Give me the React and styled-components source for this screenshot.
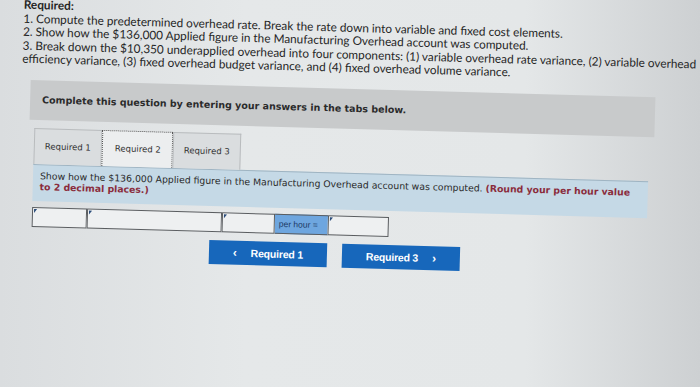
import React from 'react';
import styled, { createGlobalStyle } from 'styled-components';

const GlobalStyle = createGlobalStyle`
  html, body {
    margin: 0;
    padding: 0;
    width: 700px;
    height: 387px;
    overflow: hidden;
    background: linear-gradient(90deg, #dadddf 0%, #e5e8e9 35%, #e4e7e8 75%, #cdd0d2 100%);
  }
`;

const Page = styled.div`
  width: 700px;
  height: 387px;
  transform: rotate(1.6deg);
  transform-origin: 0 0;
  padding-left: 24px;
  box-sizing: border-box;
`;

const Intro = styled.div`
  font-family: Lato, 'Liberation Sans', sans-serif;
  font-size: 11.8px;
  line-height: 13.5px;
  color: #262626;
  white-space: nowrap;
  margin-top: -3px;
`;

const Heading = styled.div`
  font-weight: 700;
`;

const Prompt = styled.div`
  margin: 14px 0 0 9px;
  width: 625px;
  height: 40px;
  background: #c8cacb;
  display: flex;
  align-items: center;
  padding-left: 12px;
  box-sizing: border-box;
  font-family: 'DejaVu Sans', Verdana, sans-serif;
  font-size: 9.5px;
  font-weight: 700;
  color: #2b2b2b;
`;

const Work = styled.div`
  margin: 8px 0 0 14px;
  width: 615px;
`;

const TabRow = styled.div`
  display: flex;
  height: 36px;
`;

const Tab = styled.div`
  width: ${(p) => p.$w}px;
  box-sizing: border-box;
  display: flex;
  align-items: center;
  padding-left: ${(p) => (p.$active ? 12 : 10)}px;
  font-family: 'DejaVu Sans', Verdana, sans-serif;
  font-size: 8.5px;
  color: #333;
  background: ${(p) => (p.$active ? '#eceeef' : '#dadddf')};
  border: ${(p) => (p.$active ? '1.5px dotted #555' : '1px solid #b9bcbe')};
  border-bottom: none;
`;

const Band = styled.div`
  height: 37px;
  background: #c5d9e6;
  border-top: 1px solid #9fb4c2;
  box-sizing: border-box;
  padding: 5px 10px 0 7px;
  font-family: 'DejaVu Sans', Verdana, sans-serif;
  font-size: 9.3px;
  line-height: 11.5px;
  color: #2a2a2a;
`;

const Hint = styled.span`
  font-weight: 700;
  color: #8a2c3c;
`;

const InputRow = styled.div`
  display: flex;
  margin-top: 6px;
  height: 20px;
`;

const Field = styled.div`
  position: relative;
  width: ${(p) => p.$w}px;
  box-sizing: border-box;
  border: 1.5px solid #5a5d60;
  border-left-width: ${(p) => (p.$first ? 1.5 : 0.5)}px;
  background: #eef0f1;
  &::before {
    content: '';
    position: absolute;
    left: 1px;
    top: 1px;
    border-top: 4px solid #2b4c7a;
    border-right: 3px solid transparent;
  }
`;

const Unit = styled.div`
  width: ${(p) => p.$w}px;
  box-sizing: border-box;
  background: #6ea6df;
  border-top: 1.5px solid #5a5d60;
  border-bottom: 1.5px solid #5a5d60;
  display: flex;
  align-items: center;
  padding-left: 4px;
  font-family: 'Liberation Sans', Arial, sans-serif;
  font-size: 8.5px;
  color: #1d3a66;
`;

const NavRow = styled.div`
  display: flex;
  justify-content: center;
  gap: 15px;
  margin-top: 8px;
  padding-right: 8px;
`;

const NavButton = styled.div`
  width: 118px;
  height: 24px;
  background: #1767bb;
  color: #fff;
  display: flex;
  align-items: center;
  justify-content: center;
  gap: 14px;
  font-family: 'Liberation Sans', Arial, sans-serif;
  font-size: 10.5px;
  font-weight: 700;
  letter-spacing: -0.2px;
`;

const Chevron = styled.span`
  font-size: 12px;
  font-weight: 700;
`;

export default function App() {
  return (
    <>
      <GlobalStyle />
      <Page>
        <Intro>
          <Heading>Required:</Heading>
          <div>1. Compute the predetermined overhead rate. Break the rate down into variable and fixed cost elements.</div>
          <div>2. Show how the $136,000 Applied figure in the Manufacturing Overhead account was computed.</div>
          <div>3. Break down the $10,350 underapplied overhead into four components: (1) variable overhead rate variance, (2) variable overhead</div>
          <div>efficiency variance, (3) fixed overhead budget variance, and (4) fixed overhead volume variance.</div>
        </Intro>
        <Prompt>Complete this question by entering your answers in the tabs below.</Prompt>
        <Work>
          <TabRow>
            <Tab $w={68}>Required 1</Tab>
            <Tab $w={71} $active>Required 2</Tab>
            <Tab $w={68}>Required 3</Tab>
          </TabRow>
          <Band>
            Show how the $136,000 Applied figure in the Manufacturing Overhead account was computed.{' '}
            <Hint>(Round your per hour value to 2 decimal places.)</Hint>
          </Band>
          <InputRow>
            <Field $w={55} $first />
            <Field $w={135} />
            <Field $w={53} />
            <Unit $w={53}>per hour =</Unit>
            <Field $w={61} />
          </InputRow>
          <NavRow>
            <NavButton>
              <Chevron>&lsaquo;</Chevron>
              <span>Required 1</span>
            </NavButton>
            <NavButton>
              <span>Required 3</span>
              <Chevron>&rsaquo;</Chevron>
            </NavButton>
          </NavRow>
        </Work>
      </Page>
    </>
  );
}
